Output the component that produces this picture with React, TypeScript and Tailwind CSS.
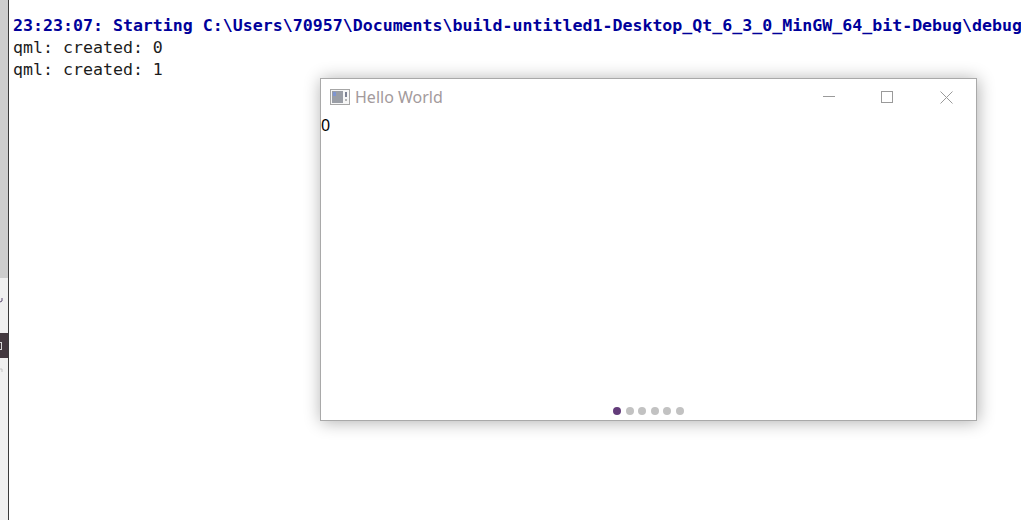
const consoleFont = "font-['DejaVu_Sans_Mono',monospace]";

function AppIcon() {
  return (
    <svg width="20" height="16" viewBox="0 0 20 16" className="shrink-0">
      <rect x="0.5" y="0.5" width="19" height="15" fill="#f6f6f6" stroke="#a6a6a6" />
      <rect x="2" y="2" width="11" height="12" fill="#9a9ea6" />
      <rect x="3" y="3" width="3" height="4" fill="#7f95d0" />
      <rect x="15" y="3" width="2" height="5" fill="#7d8294" />
      <rect x="15" y="10" width="2" height="2" fill="#b4b4b4" />
    </svg>
  );
}

function TitleButtons() {
  return (
    <div className="flex items-center">
      <svg width="14" height="14" viewBox="0 0 14 14" className="mr-[45px]">
        <path d="M1 6.5h12" stroke="#9a9a9a" fill="none" />
      </svg>
      <svg width="12" height="12" viewBox="0 0 12 12" className="mr-[47px]">
        <rect x="0.5" y="0.5" width="11" height="11" stroke="#9a9a9a" fill="none" />
      </svg>
      <svg width="13" height="13" viewBox="0 0 13 13" className="mr-[23px]">
        <path d="M0.5 0.5l12 12M12.5 0.5l-12 12" stroke="#9a9a9a" fill="none" />
      </svg>
    </div>
  );
}

function PageDots() {
  const dots = [0, 1, 2, 3, 4, 5];
  return (
    <div className="flex justify-center gap-[4.6px] pb-[5px]">
      {dots.map((dot) =>
        dot === 0 ? (
          <span key={dot} className="size-[8px] rounded-full bg-[#633c7a]" />
        ) : (
          <span key={dot} className="size-[8px] rounded-full bg-[#c2c2c2]" />
        ),
      )}
    </div>
  );
}

export default function App() {
  return (
    <div className="relative flex h-[520px] w-[1021px] overflow-hidden bg-white">
      <div className="flex w-[9px] shrink-0 flex-col border-r border-[#3a3a3a] bg-[#f0f0f0]">
        <div className="h-[278px] bg-[#cdcdcd]" />
        <svg width="8" height="5" viewBox="0 0 8 5" className="mt-[20px] shrink-0">
          <path d="M0 4l2-1V0" stroke="#5b4a72" fill="none" />
        </svg>
        <div className="mt-[30px] flex h-[25px] shrink-0 items-center bg-[#43393f]">
          <div className="h-[8px] w-[2px] border border-l-0 border-[#d8d8d8]" />
        </div>
        <svg width="8" height="5" viewBox="0 0 8 5" className="mt-[10px] shrink-0">
          <path d="M0 1h2v3" stroke="#c4c4c4" fill="none" />
        </svg>
      </div>

      <div className={`min-w-0 flex-1 pl-[4px] pt-[15px] text-[16.6px] leading-[22px] whitespace-nowrap ${consoleFont}`}>
        <div className="font-bold text-[#00009a]">
          23:23:07: Starting C:\Users\70957\Documents\build-untitled1-Desktop_Qt_6_3_0_MinGW_64_bit-Debug\debug
        </div>
        <div className="text-[#1c1c1c]">qml: created: 0</div>
        <div className="text-[#1c1c1c]">qml: created: 1</div>
      </div>

      <div className="absolute left-[320px] top-[78px] flex h-[343px] w-[657px] flex-col border border-[#a9a9a9] bg-white shadow-[1px_1px_16px_rgba(0,0,0,0.32)]">
        <div className="flex h-[36px] shrink-0 items-center justify-between pl-[9px]">
          <div className="flex items-center gap-[5px]">
            <AppIcon />
            <span className="font-['Noto_Sans',sans-serif] text-[16px] text-[#a39a9c]">Hello World</span>
          </div>
          <TitleButtons />
        </div>
        <div className="flex min-h-0 flex-1 flex-col justify-between">
          <div className="font-['Noto_Sans',sans-serif] text-[16px] leading-[20px] text-black">0</div>
          <PageDots />
        </div>
      </div>
    </div>
  );
}
